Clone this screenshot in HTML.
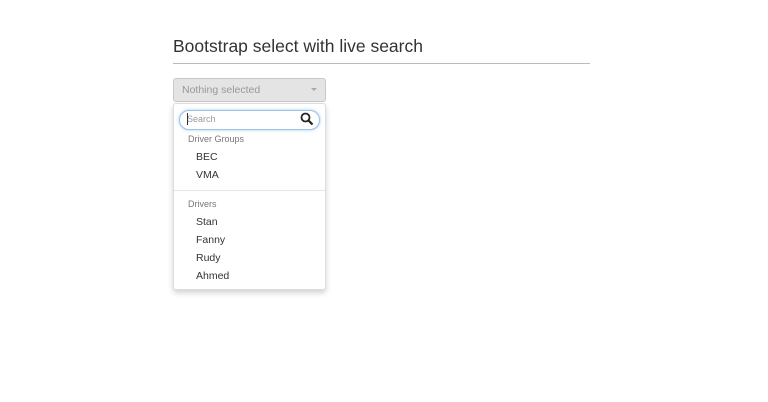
<!DOCTYPE html>
<html><head><style>
body{margin:0;width:768px;height:402px;background:#fff;font-family:"Liberation Sans",Arial,sans-serif;position:relative;overflow:hidden}
.a{position:absolute;white-space:nowrap}
</style></head><body>
<div class="a" style="left:173px;top:36px;font-size:17.5px;color:#333">Bootstrap select with live search</div>
<div class="a" style="left:173px;top:63px;width:417px;height:1px;background:#bbb"></div>
<div class="a" style="left:173px;top:78px;width:151px;height:22px;background:#e4e4e4;border:1px solid #c8c8c8;border-radius:3px"></div>
<div class="a" style="left:182px;top:84px;font-size:10.5px;color:#999">Nothing selected</div>
<div class="a" style="left:311px;top:88px;width:0;height:0;border-left:3px solid transparent;border-right:3px solid transparent;border-top:3px solid #aaa"></div>
<div class="a" style="left:173px;top:103px;width:151px;height:185px;background:#fff;border:1px solid #ddd;border-radius:3px;box-shadow:0 3px 6px rgba(0,0,0,.18)"></div>
<div class="a" style="left:179px;top:110px;width:139px;height:18px;border:1px solid #9ec3e6;border-radius:10px;box-shadow:0 0 3px rgba(102,175,233,.6);background:#fff"></div>
<div class="a" style="left:187px;top:114px;font-size:9px;color:#999">Search</div>
<div class="a" style="left:187px;top:113px;width:1px;height:12px;background:#333"></div>
<svg class="a" style="left:300px;top:112px" width="14" height="14" viewBox="0 0 14 14"><circle cx="5.5" cy="5.5" r="4" fill="none" stroke="#222" stroke-width="1.8"/><path d="M8.5 8.5 L12.5 12.5" stroke="#222" stroke-width="2.2"/></svg>
<div class="a" style="left:188px;top:134px;font-size:9px;color:#777">Driver Groups</div>
<div class="a" style="left:196px;top:151px;font-size:10.5px;color:#333">BEC</div>
<div class="a" style="left:196px;top:169px;font-size:10.5px;color:#333">VMA</div>
<div class="a" style="left:174px;top:190px;width:151px;height:1px;background:#e5e5e5"></div>
<div class="a" style="left:188px;top:199px;font-size:9px;color:#777">Drivers</div>
<div class="a" style="left:196px;top:216px;font-size:10.5px;color:#333">Stan</div>
<div class="a" style="left:196px;top:234px;font-size:10.5px;color:#333">Fanny</div>
<div class="a" style="left:196px;top:252px;font-size:10.5px;color:#333">Rudy</div>
<div class="a" style="left:196px;top:270px;font-size:10.5px;color:#333">Ahmed</div>
</body></html>
